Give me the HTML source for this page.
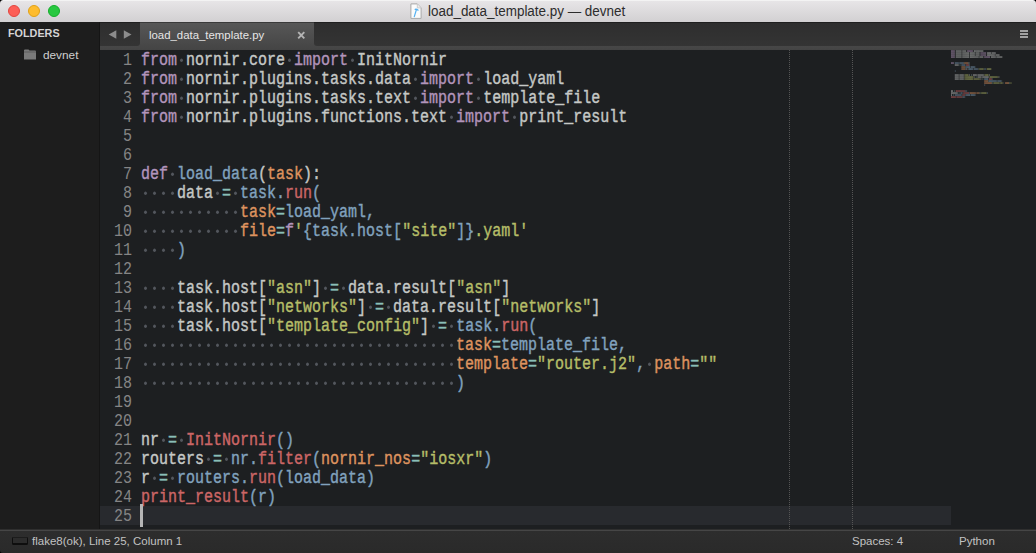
<!DOCTYPE html>
<html><head><meta charset="utf-8"><style>
html,body{margin:0;padding:0;}
body{width:1036px;height:553px;overflow:hidden;background:#000;position:relative;font-family:"Liberation Sans",sans-serif;}
#win{position:absolute;left:0;top:0;width:1036px;height:553px;border-radius:3.5px;overflow:hidden;background:#1d1f21;}
#title{position:absolute;left:0;top:0;width:1036px;height:22px;background:linear-gradient(#f3f3f3 0 1px,#e7e5e7 1px,#d2d0d2 22px);}
.tl{position:absolute;top:5px;width:12px;height:12px;border-radius:50%;box-sizing:border-box;}
#ttext{position:absolute;left:428px;top:3.5px;font-size:13.45px;color:#2c2c2c;white-space:nowrap;line-height:16px;transform-origin:0 12.66px;transform:scaleY(1.1);}
#ficon{position:absolute;left:410px;top:3px;width:13px;height:17px;}
#side{position:absolute;left:0;top:22px;width:99px;height:507px;background:#1d1d1d;border-right:1px solid #151515;}
#folders{position:absolute;left:8px;top:27px;font-size:10.8px;font-weight:bold;color:#d4d4d4;line-height:12px;letter-spacing:0px;}
#devnet{position:absolute;left:43px;top:48px;font-size:11.8px;color:#cfcfcf;line-height:14px;}
#tabbar{position:absolute;left:100px;top:22px;width:936px;height:28px;background:linear-gradient(#3a3a3a 0 1px,#575757 1px,#444444 28px);}
#wellL{position:absolute;left:100px;top:22px;width:40px;height:23.5px;background:linear-gradient(#1f1f1f 0 1px,#2e2e2e 1px,#343434);border-bottom-right-radius:3px;}
#wellR{position:absolute;left:314px;top:22px;width:722px;height:23.5px;background:linear-gradient(#1f1f1f 0 1px,#2e2e2e 1px,#343434);border-bottom-left-radius:3px;}
#tabtext{position:absolute;left:149px;top:28px;font-size:11.4px;color:#e6e6e6;line-height:14px;white-space:nowrap;}
#editor{position:absolute;left:100px;top:50px;width:936px;height:479px;background:#1d1f21;}
.curline{position:absolute;left:100px;top:506px;width:851px;height:19px;background:#282a2e;}
.ln{-webkit-text-stroke:0.35px currentColor;position:absolute;left:141px;height:19px;transform-origin:0 13.5px;transform:translateY(2.4px) scaleY(1.17);line-height:19px;font-family:"Liberation Mono",monospace;font-size:15px;white-space:pre;color:#c5c8c6;}
.gn{position:absolute;left:100px;width:32px;transform-origin:0 13.5px;transform:translateY(2.4px) scaleY(1.17);text-align:right;height:19px;line-height:19px;font-family:"Liberation Mono",monospace;font-size:15px;color:#858585;}
.p{color:#b294bb}.f{color:#c5c8c6}.b{color:#81a2be}.r{color:#cc6666}.o{color:#de935f}.g{color:#b5bd68}.a{color:#8abeb7}
#cursor{position:absolute;left:140px;top:504px;width:3px;height:23px;background:#b5b5b5;}
.ruler{position:absolute;top:50px;width:1px;height:479px;background:repeating-linear-gradient(#555 0 1px,transparent 1px 2px);}
#status{position:absolute;left:0;top:529px;width:1036px;height:24px;background:linear-gradient(#2f2f2f 0 1px,#464646 1px 2px,#2d2d2d 2px,#2a2a2a);}
.st{position:absolute;top:4.8px;font-size:11.5px;color:#c2c2c2;line-height:14px;white-space:nowrap;}
svg{position:absolute;left:0;top:0;}

</style></head><body>
<div id="win">
<div id="title">
  <div class="tl" style="left:8px;background:#fd5f57;border:1px solid #e2463f;"></div>
  <div class="tl" style="left:28px;background:#febc2e;border:1px solid #e1a116;"></div>
  <div class="tl" style="left:48px;background:#28c840;border:1px solid #14ae2a;"></div>
  <svg id="ficon" width="13" height="17" style="left:410px;top:3px"><path d="M0.9 0.9 H7.3 L11.1 4.9 V15.4 H0.9 Z" fill="#fbfbfb" stroke="#a9a9a9" stroke-width="1"/><path d="M7.3 1 V4.9 H11" fill="#ececec" stroke="#c4c4c4" stroke-width="0.8"/><path d="M4.3 13.6 L6.4 6.6 M5.2 6.3 Q6.8 6.0 8.1 7.2" fill="none" stroke="#55b2f2" stroke-width="1.25" stroke-linecap="round"/></svg>
  <div id="ttext">load_data_template.py — devnet</div>
</div>
<div id="side"></div>
<div id="folders">FOLDERS</div>
<svg width="14" height="12" style="left:24px;top:49px"><path d="M0 1.5 Q0 0.5 1 0.5 H4.5 L5.5 1.5 H11 Q12 1.5 12 2.5 V10.5 H0 Z" fill="#7a7a7a"/><rect x="0" y="2.5" width="12" height="1" fill="#5c5c5c"/></svg>
<div id="devnet">devnet</div>
<div id="tabbar"></div>
<div id="wellL"></div>
<div id="wellR"></div>
<div id="tabtext">load_data_template.py</div>
<svg width="10" height="10" style="left:297px;top:31px"><path d="M1.2 1.2 L7.3 7.3 M7.3 1.2 L1.2 7.3" stroke="#b4b4b4" stroke-width="1.9"/></svg>
<svg width="40" height="24" style="left:100px;top:22px"><path d="M8.7 12.5 L16.3 8.3 V16.7 Z" fill="#8c8c8c"/><path d="M31.5 12.5 L23.8 8.3 V16.7 Z" fill="#8c8c8c"/></svg>
<svg width="12" height="12" style="left:1019px;top:29px"><rect x="1" y="1" width="8" height="2" fill="#a2a2a2"/><rect x="1" y="4" width="8" height="2" fill="#a2a2a2"/><rect x="1" y="7" width="8" height="2" fill="#a2a2a2"/></svg>
<div id="editor"></div>
<div class="curline"></div>
<div class="ruler" style="left:789px"></div>
<div class="ruler" style="left:852px"></div>
<svg width="1036" height="553" style="fill:#53575d"><ellipse cx="181.5" cy="60.2" rx="1.45" ry="1.8"/><ellipse cx="289.5" cy="60.2" rx="1.45" ry="1.8"/><ellipse cx="352.5" cy="60.2" rx="1.45" ry="1.8"/><ellipse cx="181.5" cy="79.2" rx="1.45" ry="1.8"/><ellipse cx="415.5" cy="79.2" rx="1.45" ry="1.8"/><ellipse cx="478.5" cy="79.2" rx="1.45" ry="1.8"/><ellipse cx="181.5" cy="98.2" rx="1.45" ry="1.8"/><ellipse cx="415.5" cy="98.2" rx="1.45" ry="1.8"/><ellipse cx="478.5" cy="98.2" rx="1.45" ry="1.8"/><ellipse cx="181.5" cy="117.2" rx="1.45" ry="1.8"/><ellipse cx="451.5" cy="117.2" rx="1.45" ry="1.8"/><ellipse cx="514.5" cy="117.2" rx="1.45" ry="1.8"/><ellipse cx="172.5" cy="174.2" rx="1.45" ry="1.8"/><ellipse cx="145.5" cy="193.2" rx="1.45" ry="1.8"/><ellipse cx="154.5" cy="193.2" rx="1.45" ry="1.8"/><ellipse cx="163.5" cy="193.2" rx="1.45" ry="1.8"/><ellipse cx="172.5" cy="193.2" rx="1.45" ry="1.8"/><ellipse cx="217.5" cy="193.2" rx="1.45" ry="1.8"/><ellipse cx="235.5" cy="193.2" rx="1.45" ry="1.8"/><ellipse cx="145.5" cy="212.2" rx="1.45" ry="1.8"/><ellipse cx="154.5" cy="212.2" rx="1.45" ry="1.8"/><ellipse cx="163.5" cy="212.2" rx="1.45" ry="1.8"/><ellipse cx="172.5" cy="212.2" rx="1.45" ry="1.8"/><ellipse cx="181.5" cy="212.2" rx="1.45" ry="1.8"/><ellipse cx="190.5" cy="212.2" rx="1.45" ry="1.8"/><ellipse cx="199.5" cy="212.2" rx="1.45" ry="1.8"/><ellipse cx="208.5" cy="212.2" rx="1.45" ry="1.8"/><ellipse cx="217.5" cy="212.2" rx="1.45" ry="1.8"/><ellipse cx="226.5" cy="212.2" rx="1.45" ry="1.8"/><ellipse cx="235.5" cy="212.2" rx="1.45" ry="1.8"/><ellipse cx="145.5" cy="231.2" rx="1.45" ry="1.8"/><ellipse cx="154.5" cy="231.2" rx="1.45" ry="1.8"/><ellipse cx="163.5" cy="231.2" rx="1.45" ry="1.8"/><ellipse cx="172.5" cy="231.2" rx="1.45" ry="1.8"/><ellipse cx="181.5" cy="231.2" rx="1.45" ry="1.8"/><ellipse cx="190.5" cy="231.2" rx="1.45" ry="1.8"/><ellipse cx="199.5" cy="231.2" rx="1.45" ry="1.8"/><ellipse cx="208.5" cy="231.2" rx="1.45" ry="1.8"/><ellipse cx="217.5" cy="231.2" rx="1.45" ry="1.8"/><ellipse cx="226.5" cy="231.2" rx="1.45" ry="1.8"/><ellipse cx="235.5" cy="231.2" rx="1.45" ry="1.8"/><ellipse cx="145.5" cy="250.2" rx="1.45" ry="1.8"/><ellipse cx="154.5" cy="250.2" rx="1.45" ry="1.8"/><ellipse cx="163.5" cy="250.2" rx="1.45" ry="1.8"/><ellipse cx="172.5" cy="250.2" rx="1.45" ry="1.8"/><ellipse cx="145.5" cy="288.2" rx="1.45" ry="1.8"/><ellipse cx="154.5" cy="288.2" rx="1.45" ry="1.8"/><ellipse cx="163.5" cy="288.2" rx="1.45" ry="1.8"/><ellipse cx="172.5" cy="288.2" rx="1.45" ry="1.8"/><ellipse cx="325.5" cy="288.2" rx="1.45" ry="1.8"/><ellipse cx="343.5" cy="288.2" rx="1.45" ry="1.8"/><ellipse cx="145.5" cy="307.2" rx="1.45" ry="1.8"/><ellipse cx="154.5" cy="307.2" rx="1.45" ry="1.8"/><ellipse cx="163.5" cy="307.2" rx="1.45" ry="1.8"/><ellipse cx="172.5" cy="307.2" rx="1.45" ry="1.8"/><ellipse cx="370.5" cy="307.2" rx="1.45" ry="1.8"/><ellipse cx="388.5" cy="307.2" rx="1.45" ry="1.8"/><ellipse cx="145.5" cy="326.2" rx="1.45" ry="1.8"/><ellipse cx="154.5" cy="326.2" rx="1.45" ry="1.8"/><ellipse cx="163.5" cy="326.2" rx="1.45" ry="1.8"/><ellipse cx="172.5" cy="326.2" rx="1.45" ry="1.8"/><ellipse cx="433.5" cy="326.2" rx="1.45" ry="1.8"/><ellipse cx="451.5" cy="326.2" rx="1.45" ry="1.8"/><ellipse cx="145.5" cy="345.2" rx="1.45" ry="1.8"/><ellipse cx="154.5" cy="345.2" rx="1.45" ry="1.8"/><ellipse cx="163.5" cy="345.2" rx="1.45" ry="1.8"/><ellipse cx="172.5" cy="345.2" rx="1.45" ry="1.8"/><ellipse cx="181.5" cy="345.2" rx="1.45" ry="1.8"/><ellipse cx="190.5" cy="345.2" rx="1.45" ry="1.8"/><ellipse cx="199.5" cy="345.2" rx="1.45" ry="1.8"/><ellipse cx="208.5" cy="345.2" rx="1.45" ry="1.8"/><ellipse cx="217.5" cy="345.2" rx="1.45" ry="1.8"/><ellipse cx="226.5" cy="345.2" rx="1.45" ry="1.8"/><ellipse cx="235.5" cy="345.2" rx="1.45" ry="1.8"/><ellipse cx="244.5" cy="345.2" rx="1.45" ry="1.8"/><ellipse cx="253.5" cy="345.2" rx="1.45" ry="1.8"/><ellipse cx="262.5" cy="345.2" rx="1.45" ry="1.8"/><ellipse cx="271.5" cy="345.2" rx="1.45" ry="1.8"/><ellipse cx="280.5" cy="345.2" rx="1.45" ry="1.8"/><ellipse cx="289.5" cy="345.2" rx="1.45" ry="1.8"/><ellipse cx="298.5" cy="345.2" rx="1.45" ry="1.8"/><ellipse cx="307.5" cy="345.2" rx="1.45" ry="1.8"/><ellipse cx="316.5" cy="345.2" rx="1.45" ry="1.8"/><ellipse cx="325.5" cy="345.2" rx="1.45" ry="1.8"/><ellipse cx="334.5" cy="345.2" rx="1.45" ry="1.8"/><ellipse cx="343.5" cy="345.2" rx="1.45" ry="1.8"/><ellipse cx="352.5" cy="345.2" rx="1.45" ry="1.8"/><ellipse cx="361.5" cy="345.2" rx="1.45" ry="1.8"/><ellipse cx="370.5" cy="345.2" rx="1.45" ry="1.8"/><ellipse cx="379.5" cy="345.2" rx="1.45" ry="1.8"/><ellipse cx="388.5" cy="345.2" rx="1.45" ry="1.8"/><ellipse cx="397.5" cy="345.2" rx="1.45" ry="1.8"/><ellipse cx="406.5" cy="345.2" rx="1.45" ry="1.8"/><ellipse cx="415.5" cy="345.2" rx="1.45" ry="1.8"/><ellipse cx="424.5" cy="345.2" rx="1.45" ry="1.8"/><ellipse cx="433.5" cy="345.2" rx="1.45" ry="1.8"/><ellipse cx="442.5" cy="345.2" rx="1.45" ry="1.8"/><ellipse cx="451.5" cy="345.2" rx="1.45" ry="1.8"/><ellipse cx="145.5" cy="364.2" rx="1.45" ry="1.8"/><ellipse cx="154.5" cy="364.2" rx="1.45" ry="1.8"/><ellipse cx="163.5" cy="364.2" rx="1.45" ry="1.8"/><ellipse cx="172.5" cy="364.2" rx="1.45" ry="1.8"/><ellipse cx="181.5" cy="364.2" rx="1.45" ry="1.8"/><ellipse cx="190.5" cy="364.2" rx="1.45" ry="1.8"/><ellipse cx="199.5" cy="364.2" rx="1.45" ry="1.8"/><ellipse cx="208.5" cy="364.2" rx="1.45" ry="1.8"/><ellipse cx="217.5" cy="364.2" rx="1.45" ry="1.8"/><ellipse cx="226.5" cy="364.2" rx="1.45" ry="1.8"/><ellipse cx="235.5" cy="364.2" rx="1.45" ry="1.8"/><ellipse cx="244.5" cy="364.2" rx="1.45" ry="1.8"/><ellipse cx="253.5" cy="364.2" rx="1.45" ry="1.8"/><ellipse cx="262.5" cy="364.2" rx="1.45" ry="1.8"/><ellipse cx="271.5" cy="364.2" rx="1.45" ry="1.8"/><ellipse cx="280.5" cy="364.2" rx="1.45" ry="1.8"/><ellipse cx="289.5" cy="364.2" rx="1.45" ry="1.8"/><ellipse cx="298.5" cy="364.2" rx="1.45" ry="1.8"/><ellipse cx="307.5" cy="364.2" rx="1.45" ry="1.8"/><ellipse cx="316.5" cy="364.2" rx="1.45" ry="1.8"/><ellipse cx="325.5" cy="364.2" rx="1.45" ry="1.8"/><ellipse cx="334.5" cy="364.2" rx="1.45" ry="1.8"/><ellipse cx="343.5" cy="364.2" rx="1.45" ry="1.8"/><ellipse cx="352.5" cy="364.2" rx="1.45" ry="1.8"/><ellipse cx="361.5" cy="364.2" rx="1.45" ry="1.8"/><ellipse cx="370.5" cy="364.2" rx="1.45" ry="1.8"/><ellipse cx="379.5" cy="364.2" rx="1.45" ry="1.8"/><ellipse cx="388.5" cy="364.2" rx="1.45" ry="1.8"/><ellipse cx="397.5" cy="364.2" rx="1.45" ry="1.8"/><ellipse cx="406.5" cy="364.2" rx="1.45" ry="1.8"/><ellipse cx="415.5" cy="364.2" rx="1.45" ry="1.8"/><ellipse cx="424.5" cy="364.2" rx="1.45" ry="1.8"/><ellipse cx="433.5" cy="364.2" rx="1.45" ry="1.8"/><ellipse cx="442.5" cy="364.2" rx="1.45" ry="1.8"/><ellipse cx="451.5" cy="364.2" rx="1.45" ry="1.8"/><ellipse cx="649.5" cy="364.2" rx="1.45" ry="1.8"/><ellipse cx="145.5" cy="383.2" rx="1.45" ry="1.8"/><ellipse cx="154.5" cy="383.2" rx="1.45" ry="1.8"/><ellipse cx="163.5" cy="383.2" rx="1.45" ry="1.8"/><ellipse cx="172.5" cy="383.2" rx="1.45" ry="1.8"/><ellipse cx="181.5" cy="383.2" rx="1.45" ry="1.8"/><ellipse cx="190.5" cy="383.2" rx="1.45" ry="1.8"/><ellipse cx="199.5" cy="383.2" rx="1.45" ry="1.8"/><ellipse cx="208.5" cy="383.2" rx="1.45" ry="1.8"/><ellipse cx="217.5" cy="383.2" rx="1.45" ry="1.8"/><ellipse cx="226.5" cy="383.2" rx="1.45" ry="1.8"/><ellipse cx="235.5" cy="383.2" rx="1.45" ry="1.8"/><ellipse cx="244.5" cy="383.2" rx="1.45" ry="1.8"/><ellipse cx="253.5" cy="383.2" rx="1.45" ry="1.8"/><ellipse cx="262.5" cy="383.2" rx="1.45" ry="1.8"/><ellipse cx="271.5" cy="383.2" rx="1.45" ry="1.8"/><ellipse cx="280.5" cy="383.2" rx="1.45" ry="1.8"/><ellipse cx="289.5" cy="383.2" rx="1.45" ry="1.8"/><ellipse cx="298.5" cy="383.2" rx="1.45" ry="1.8"/><ellipse cx="307.5" cy="383.2" rx="1.45" ry="1.8"/><ellipse cx="316.5" cy="383.2" rx="1.45" ry="1.8"/><ellipse cx="325.5" cy="383.2" rx="1.45" ry="1.8"/><ellipse cx="334.5" cy="383.2" rx="1.45" ry="1.8"/><ellipse cx="343.5" cy="383.2" rx="1.45" ry="1.8"/><ellipse cx="352.5" cy="383.2" rx="1.45" ry="1.8"/><ellipse cx="361.5" cy="383.2" rx="1.45" ry="1.8"/><ellipse cx="370.5" cy="383.2" rx="1.45" ry="1.8"/><ellipse cx="379.5" cy="383.2" rx="1.45" ry="1.8"/><ellipse cx="388.5" cy="383.2" rx="1.45" ry="1.8"/><ellipse cx="397.5" cy="383.2" rx="1.45" ry="1.8"/><ellipse cx="406.5" cy="383.2" rx="1.45" ry="1.8"/><ellipse cx="415.5" cy="383.2" rx="1.45" ry="1.8"/><ellipse cx="424.5" cy="383.2" rx="1.45" ry="1.8"/><ellipse cx="433.5" cy="383.2" rx="1.45" ry="1.8"/><ellipse cx="442.5" cy="383.2" rx="1.45" ry="1.8"/><ellipse cx="451.5" cy="383.2" rx="1.45" ry="1.8"/><ellipse cx="163.5" cy="440.2" rx="1.45" ry="1.8"/><ellipse cx="181.5" cy="440.2" rx="1.45" ry="1.8"/><ellipse cx="208.5" cy="459.2" rx="1.45" ry="1.8"/><ellipse cx="226.5" cy="459.2" rx="1.45" ry="1.8"/><ellipse cx="154.5" cy="478.2" rx="1.45" ry="1.8"/><ellipse cx="172.5" cy="478.2" rx="1.45" ry="1.8"/></svg>
<div class="gn" style="top:50px">1</div>
<div class="gn" style="top:69px">2</div>
<div class="gn" style="top:88px">3</div>
<div class="gn" style="top:107px">4</div>
<div class="gn" style="top:126px">5</div>
<div class="gn" style="top:145px">6</div>
<div class="gn" style="top:164px">7</div>
<div class="gn" style="top:183px">8</div>
<div class="gn" style="top:202px">9</div>
<div class="gn" style="top:221px">10</div>
<div class="gn" style="top:240px">11</div>
<div class="gn" style="top:259px">12</div>
<div class="gn" style="top:278px">13</div>
<div class="gn" style="top:297px">14</div>
<div class="gn" style="top:316px">15</div>
<div class="gn" style="top:335px">16</div>
<div class="gn" style="top:354px">17</div>
<div class="gn" style="top:373px">18</div>
<div class="gn" style="top:392px">19</div>
<div class="gn" style="top:411px">20</div>
<div class="gn" style="top:430px">21</div>
<div class="gn" style="top:449px">22</div>
<div class="gn" style="top:468px">23</div>
<div class="gn" style="top:487px">24</div>
<div class="gn" style="top:506px">25</div>
<div class="ln" style="top:50px"><span class="p">from</span> <span class="f">nornir.core</span> <span class="p">import</span> <span class="f">InitNornir</span></div>
<div class="ln" style="top:69px"><span class="p">from</span> <span class="f">nornir.plugins.tasks.data</span> <span class="p">import</span> <span class="f">load_yaml</span></div>
<div class="ln" style="top:88px"><span class="p">from</span> <span class="f">nornir.plugins.tasks.text</span> <span class="p">import</span> <span class="f">template_file</span></div>
<div class="ln" style="top:107px"><span class="p">from</span> <span class="f">nornir.plugins.functions.text</span> <span class="p">import</span> <span class="f">print_result</span></div>
<div class="ln" style="top:126px"></div>
<div class="ln" style="top:145px"></div>
<div class="ln" style="top:164px"><span class="p">def</span> <span class="b">load_data</span><span class="f">(</span><span class="o">task</span><span class="f">):</span></div>
<div class="ln" style="top:183px">    <span class="f">data</span> <span class="a">=</span> <span class="b">task.</span><span class="r">run</span><span class="b">(</span></div>
<div class="ln" style="top:202px">           <span class="o">task</span><span class="a">=</span><span class="b">load_yaml,</span></div>
<div class="ln" style="top:221px">           <span class="o">file</span><span class="a">=</span><span class="p">f</span><span class="g">&#x27;</span><span class="b">{task.host[</span><span class="g">&quot;site&quot;</span><span class="b">]}</span><span class="g">.yaml&#x27;</span></div>
<div class="ln" style="top:240px">    <span class="b">)</span></div>
<div class="ln" style="top:259px"></div>
<div class="ln" style="top:278px">    <span class="f">task.host[</span><span class="g">&quot;asn&quot;</span><span class="f">]</span> <span class="a">=</span> <span class="f">data.result[</span><span class="g">&quot;asn&quot;</span><span class="f">]</span></div>
<div class="ln" style="top:297px">    <span class="f">task.host[</span><span class="g">&quot;networks&quot;</span><span class="f">]</span> <span class="a">=</span> <span class="f">data.result[</span><span class="g">&quot;networks&quot;</span><span class="f">]</span></div>
<div class="ln" style="top:316px">    <span class="f">task.host[</span><span class="g">&quot;template_config&quot;</span><span class="f">]</span> <span class="a">=</span> <span class="b">task.</span><span class="r">run</span><span class="b">(</span></div>
<div class="ln" style="top:335px">                                   <span class="o">task</span><span class="a">=</span><span class="b">template_file,</span></div>
<div class="ln" style="top:354px">                                   <span class="o">template</span><span class="a">=</span><span class="g">&quot;router.j2&quot;</span><span class="b">,</span> <span class="o">path</span><span class="a">=</span><span class="g">&quot;&quot;</span></div>
<div class="ln" style="top:373px">                                   <span class="b">)</span></div>
<div class="ln" style="top:392px"></div>
<div class="ln" style="top:411px"></div>
<div class="ln" style="top:430px"><span class="f">nr</span> <span class="a">=</span> <span class="r">InitNornir</span><span class="b">()</span></div>
<div class="ln" style="top:449px"><span class="f">routers</span> <span class="a">=</span> <span class="b">nr.</span><span class="r">filter</span><span class="b">(</span><span class="o">nornir_nos</span><span class="a">=</span><span class="g">&quot;iosxr&quot;</span><span class="b">)</span></div>
<div class="ln" style="top:468px"><span class="f">r</span> <span class="a">=</span> <span class="b">routers.</span><span class="r">run</span><span class="b">(load_data)</span></div>
<div class="ln" style="top:487px"><span class="r">print_result</span><span class="b">(r)</span></div>
<div class="ln" style="top:506px"></div>
<div id="cursor"></div>
<svg width="1036" height="553" style="opacity:0.62"><rect x="951.00" y="50.20" width="0.95" height="1.7" fill="#b294bb" fill-opacity="0.85"/><rect x="951.95" y="50.20" width="0.95" height="1.7" fill="#b294bb" fill-opacity="0.85"/><rect x="952.90" y="50.20" width="0.95" height="1.7" fill="#b294bb" fill-opacity="0.85"/><rect x="953.85" y="50.20" width="0.95" height="1.7" fill="#b294bb" fill-opacity="0.85"/><rect x="955.75" y="50.20" width="0.95" height="1.7" fill="#c5c8c6" fill-opacity="0.85"/><rect x="956.70" y="50.20" width="0.95" height="1.7" fill="#c5c8c6" fill-opacity="0.85"/><rect x="957.65" y="50.20" width="0.95" height="1.7" fill="#c5c8c6" fill-opacity="0.85"/><rect x="958.60" y="50.20" width="0.95" height="1.7" fill="#c5c8c6" fill-opacity="0.85"/><rect x="959.55" y="50.20" width="0.95" height="1.7" fill="#c5c8c6" fill-opacity="0.85"/><rect x="960.50" y="50.20" width="0.95" height="1.7" fill="#c5c8c6" fill-opacity="0.85"/><rect x="961.45" y="50.20" width="0.95" height="1.7" fill="#c5c8c6" fill-opacity="0.25"/><rect x="962.40" y="50.20" width="0.95" height="1.7" fill="#c5c8c6" fill-opacity="0.85"/><rect x="963.35" y="50.20" width="0.95" height="1.7" fill="#c5c8c6" fill-opacity="0.85"/><rect x="964.30" y="50.20" width="0.95" height="1.7" fill="#c5c8c6" fill-opacity="0.85"/><rect x="965.25" y="50.20" width="0.95" height="1.7" fill="#c5c8c6" fill-opacity="0.85"/><rect x="967.15" y="50.20" width="0.95" height="1.7" fill="#b294bb" fill-opacity="0.85"/><rect x="968.10" y="50.20" width="0.95" height="1.7" fill="#b294bb" fill-opacity="0.85"/><rect x="969.05" y="50.20" width="0.95" height="1.7" fill="#b294bb" fill-opacity="0.85"/><rect x="970.00" y="50.20" width="0.95" height="1.7" fill="#b294bb" fill-opacity="0.85"/><rect x="970.95" y="50.20" width="0.95" height="1.7" fill="#b294bb" fill-opacity="0.85"/><rect x="971.90" y="50.20" width="0.95" height="1.7" fill="#b294bb" fill-opacity="0.85"/><rect x="973.80" y="50.20" width="0.95" height="1.7" fill="#c5c8c6" fill-opacity="1.00"/><rect x="974.75" y="50.20" width="0.95" height="1.7" fill="#c5c8c6" fill-opacity="0.85"/><rect x="975.70" y="50.20" width="0.95" height="1.7" fill="#c5c8c6" fill-opacity="0.85"/><rect x="976.65" y="50.20" width="0.95" height="1.7" fill="#c5c8c6" fill-opacity="0.85"/><rect x="977.60" y="50.20" width="0.95" height="1.7" fill="#c5c8c6" fill-opacity="1.00"/><rect x="978.55" y="50.20" width="0.95" height="1.7" fill="#c5c8c6" fill-opacity="0.85"/><rect x="979.50" y="50.20" width="0.95" height="1.7" fill="#c5c8c6" fill-opacity="0.85"/><rect x="980.45" y="50.20" width="0.95" height="1.7" fill="#c5c8c6" fill-opacity="0.85"/><rect x="981.40" y="50.20" width="0.95" height="1.7" fill="#c5c8c6" fill-opacity="0.85"/><rect x="982.35" y="50.20" width="0.95" height="1.7" fill="#c5c8c6" fill-opacity="0.85"/><rect x="951.00" y="52.20" width="0.95" height="1.7" fill="#b294bb" fill-opacity="0.85"/><rect x="951.95" y="52.20" width="0.95" height="1.7" fill="#b294bb" fill-opacity="0.85"/><rect x="952.90" y="52.20" width="0.95" height="1.7" fill="#b294bb" fill-opacity="0.85"/><rect x="953.85" y="52.20" width="0.95" height="1.7" fill="#b294bb" fill-opacity="0.85"/><rect x="955.75" y="52.20" width="0.95" height="1.7" fill="#c5c8c6" fill-opacity="0.85"/><rect x="956.70" y="52.20" width="0.95" height="1.7" fill="#c5c8c6" fill-opacity="0.85"/><rect x="957.65" y="52.20" width="0.95" height="1.7" fill="#c5c8c6" fill-opacity="0.85"/><rect x="958.60" y="52.20" width="0.95" height="1.7" fill="#c5c8c6" fill-opacity="0.85"/><rect x="959.55" y="52.20" width="0.95" height="1.7" fill="#c5c8c6" fill-opacity="0.85"/><rect x="960.50" y="52.20" width="0.95" height="1.7" fill="#c5c8c6" fill-opacity="0.85"/><rect x="961.45" y="52.20" width="0.95" height="1.7" fill="#c5c8c6" fill-opacity="0.25"/><rect x="962.40" y="52.20" width="0.95" height="1.7" fill="#c5c8c6" fill-opacity="0.85"/><rect x="963.35" y="52.20" width="0.95" height="1.7" fill="#c5c8c6" fill-opacity="0.85"/><rect x="964.30" y="52.20" width="0.95" height="1.7" fill="#c5c8c6" fill-opacity="0.85"/><rect x="965.25" y="52.20" width="0.95" height="1.7" fill="#c5c8c6" fill-opacity="0.85"/><rect x="966.20" y="52.20" width="0.95" height="1.7" fill="#c5c8c6" fill-opacity="0.85"/><rect x="967.15" y="52.20" width="0.95" height="1.7" fill="#c5c8c6" fill-opacity="0.85"/><rect x="968.10" y="52.20" width="0.95" height="1.7" fill="#c5c8c6" fill-opacity="0.85"/><rect x="969.05" y="52.20" width="0.95" height="1.7" fill="#c5c8c6" fill-opacity="0.25"/><rect x="970.00" y="52.20" width="0.95" height="1.7" fill="#c5c8c6" fill-opacity="0.85"/><rect x="970.95" y="52.20" width="0.95" height="1.7" fill="#c5c8c6" fill-opacity="0.85"/><rect x="971.90" y="52.20" width="0.95" height="1.7" fill="#c5c8c6" fill-opacity="0.85"/><rect x="972.85" y="52.20" width="0.95" height="1.7" fill="#c5c8c6" fill-opacity="0.85"/><rect x="973.80" y="52.20" width="0.95" height="1.7" fill="#c5c8c6" fill-opacity="0.85"/><rect x="974.75" y="52.20" width="0.95" height="1.7" fill="#c5c8c6" fill-opacity="0.25"/><rect x="975.70" y="52.20" width="0.95" height="1.7" fill="#c5c8c6" fill-opacity="0.85"/><rect x="976.65" y="52.20" width="0.95" height="1.7" fill="#c5c8c6" fill-opacity="0.85"/><rect x="977.60" y="52.20" width="0.95" height="1.7" fill="#c5c8c6" fill-opacity="0.85"/><rect x="978.55" y="52.20" width="0.95" height="1.7" fill="#c5c8c6" fill-opacity="0.85"/><rect x="980.45" y="52.20" width="0.95" height="1.7" fill="#b294bb" fill-opacity="0.85"/><rect x="981.40" y="52.20" width="0.95" height="1.7" fill="#b294bb" fill-opacity="0.85"/><rect x="982.35" y="52.20" width="0.95" height="1.7" fill="#b294bb" fill-opacity="0.85"/><rect x="983.30" y="52.20" width="0.95" height="1.7" fill="#b294bb" fill-opacity="0.85"/><rect x="984.25" y="52.20" width="0.95" height="1.7" fill="#b294bb" fill-opacity="0.85"/><rect x="985.20" y="52.20" width="0.95" height="1.7" fill="#b294bb" fill-opacity="0.85"/><rect x="987.10" y="52.20" width="0.95" height="1.7" fill="#c5c8c6" fill-opacity="0.85"/><rect x="988.05" y="52.20" width="0.95" height="1.7" fill="#c5c8c6" fill-opacity="0.85"/><rect x="989.00" y="52.20" width="0.95" height="1.7" fill="#c5c8c6" fill-opacity="0.85"/><rect x="989.95" y="52.20" width="0.95" height="1.7" fill="#c5c8c6" fill-opacity="0.85"/><rect x="990.90" y="52.20" width="0.95" height="1.7" fill="#c5c8c6" fill-opacity="0.35"/><rect x="991.85" y="52.20" width="0.95" height="1.7" fill="#c5c8c6" fill-opacity="0.85"/><rect x="992.80" y="52.20" width="0.95" height="1.7" fill="#c5c8c6" fill-opacity="0.85"/><rect x="993.75" y="52.20" width="0.95" height="1.7" fill="#c5c8c6" fill-opacity="0.85"/><rect x="994.70" y="52.20" width="0.95" height="1.7" fill="#c5c8c6" fill-opacity="0.85"/><rect x="951.00" y="54.20" width="0.95" height="1.7" fill="#b294bb" fill-opacity="0.85"/><rect x="951.95" y="54.20" width="0.95" height="1.7" fill="#b294bb" fill-opacity="0.85"/><rect x="952.90" y="54.20" width="0.95" height="1.7" fill="#b294bb" fill-opacity="0.85"/><rect x="953.85" y="54.20" width="0.95" height="1.7" fill="#b294bb" fill-opacity="0.85"/><rect x="955.75" y="54.20" width="0.95" height="1.7" fill="#c5c8c6" fill-opacity="0.85"/><rect x="956.70" y="54.20" width="0.95" height="1.7" fill="#c5c8c6" fill-opacity="0.85"/><rect x="957.65" y="54.20" width="0.95" height="1.7" fill="#c5c8c6" fill-opacity="0.85"/><rect x="958.60" y="54.20" width="0.95" height="1.7" fill="#c5c8c6" fill-opacity="0.85"/><rect x="959.55" y="54.20" width="0.95" height="1.7" fill="#c5c8c6" fill-opacity="0.85"/><rect x="960.50" y="54.20" width="0.95" height="1.7" fill="#c5c8c6" fill-opacity="0.85"/><rect x="961.45" y="54.20" width="0.95" height="1.7" fill="#c5c8c6" fill-opacity="0.25"/><rect x="962.40" y="54.20" width="0.95" height="1.7" fill="#c5c8c6" fill-opacity="0.85"/><rect x="963.35" y="54.20" width="0.95" height="1.7" fill="#c5c8c6" fill-opacity="0.85"/><rect x="964.30" y="54.20" width="0.95" height="1.7" fill="#c5c8c6" fill-opacity="0.85"/><rect x="965.25" y="54.20" width="0.95" height="1.7" fill="#c5c8c6" fill-opacity="0.85"/><rect x="966.20" y="54.20" width="0.95" height="1.7" fill="#c5c8c6" fill-opacity="0.85"/><rect x="967.15" y="54.20" width="0.95" height="1.7" fill="#c5c8c6" fill-opacity="0.85"/><rect x="968.10" y="54.20" width="0.95" height="1.7" fill="#c5c8c6" fill-opacity="0.85"/><rect x="969.05" y="54.20" width="0.95" height="1.7" fill="#c5c8c6" fill-opacity="0.25"/><rect x="970.00" y="54.20" width="0.95" height="1.7" fill="#c5c8c6" fill-opacity="0.85"/><rect x="970.95" y="54.20" width="0.95" height="1.7" fill="#c5c8c6" fill-opacity="0.85"/><rect x="971.90" y="54.20" width="0.95" height="1.7" fill="#c5c8c6" fill-opacity="0.85"/><rect x="972.85" y="54.20" width="0.95" height="1.7" fill="#c5c8c6" fill-opacity="0.85"/><rect x="973.80" y="54.20" width="0.95" height="1.7" fill="#c5c8c6" fill-opacity="0.85"/><rect x="974.75" y="54.20" width="0.95" height="1.7" fill="#c5c8c6" fill-opacity="0.25"/><rect x="975.70" y="54.20" width="0.95" height="1.7" fill="#c5c8c6" fill-opacity="0.85"/><rect x="976.65" y="54.20" width="0.95" height="1.7" fill="#c5c8c6" fill-opacity="0.85"/><rect x="977.60" y="54.20" width="0.95" height="1.7" fill="#c5c8c6" fill-opacity="0.85"/><rect x="978.55" y="54.20" width="0.95" height="1.7" fill="#c5c8c6" fill-opacity="0.85"/><rect x="980.45" y="54.20" width="0.95" height="1.7" fill="#b294bb" fill-opacity="0.85"/><rect x="981.40" y="54.20" width="0.95" height="1.7" fill="#b294bb" fill-opacity="0.85"/><rect x="982.35" y="54.20" width="0.95" height="1.7" fill="#b294bb" fill-opacity="0.85"/><rect x="983.30" y="54.20" width="0.95" height="1.7" fill="#b294bb" fill-opacity="0.85"/><rect x="984.25" y="54.20" width="0.95" height="1.7" fill="#b294bb" fill-opacity="0.85"/><rect x="985.20" y="54.20" width="0.95" height="1.7" fill="#b294bb" fill-opacity="0.85"/><rect x="987.10" y="54.20" width="0.95" height="1.7" fill="#c5c8c6" fill-opacity="0.85"/><rect x="988.05" y="54.20" width="0.95" height="1.7" fill="#c5c8c6" fill-opacity="0.85"/><rect x="989.00" y="54.20" width="0.95" height="1.7" fill="#c5c8c6" fill-opacity="0.85"/><rect x="989.95" y="54.20" width="0.95" height="1.7" fill="#c5c8c6" fill-opacity="0.85"/><rect x="990.90" y="54.20" width="0.95" height="1.7" fill="#c5c8c6" fill-opacity="0.85"/><rect x="991.85" y="54.20" width="0.95" height="1.7" fill="#c5c8c6" fill-opacity="0.85"/><rect x="992.80" y="54.20" width="0.95" height="1.7" fill="#c5c8c6" fill-opacity="0.85"/><rect x="993.75" y="54.20" width="0.95" height="1.7" fill="#c5c8c6" fill-opacity="0.85"/><rect x="994.70" y="54.20" width="0.95" height="1.7" fill="#c5c8c6" fill-opacity="0.35"/><rect x="995.65" y="54.20" width="0.95" height="1.7" fill="#c5c8c6" fill-opacity="0.85"/><rect x="996.60" y="54.20" width="0.95" height="1.7" fill="#c5c8c6" fill-opacity="0.85"/><rect x="997.55" y="54.20" width="0.95" height="1.7" fill="#c5c8c6" fill-opacity="0.85"/><rect x="998.50" y="54.20" width="0.95" height="1.7" fill="#c5c8c6" fill-opacity="0.85"/><rect x="951.00" y="56.20" width="0.95" height="1.7" fill="#b294bb" fill-opacity="0.85"/><rect x="951.95" y="56.20" width="0.95" height="1.7" fill="#b294bb" fill-opacity="0.85"/><rect x="952.90" y="56.20" width="0.95" height="1.7" fill="#b294bb" fill-opacity="0.85"/><rect x="953.85" y="56.20" width="0.95" height="1.7" fill="#b294bb" fill-opacity="0.85"/><rect x="955.75" y="56.20" width="0.95" height="1.7" fill="#c5c8c6" fill-opacity="0.85"/><rect x="956.70" y="56.20" width="0.95" height="1.7" fill="#c5c8c6" fill-opacity="0.85"/><rect x="957.65" y="56.20" width="0.95" height="1.7" fill="#c5c8c6" fill-opacity="0.85"/><rect x="958.60" y="56.20" width="0.95" height="1.7" fill="#c5c8c6" fill-opacity="0.85"/><rect x="959.55" y="56.20" width="0.95" height="1.7" fill="#c5c8c6" fill-opacity="0.85"/><rect x="960.50" y="56.20" width="0.95" height="1.7" fill="#c5c8c6" fill-opacity="0.85"/><rect x="961.45" y="56.20" width="0.95" height="1.7" fill="#c5c8c6" fill-opacity="0.25"/><rect x="962.40" y="56.20" width="0.95" height="1.7" fill="#c5c8c6" fill-opacity="0.85"/><rect x="963.35" y="56.20" width="0.95" height="1.7" fill="#c5c8c6" fill-opacity="0.85"/><rect x="964.30" y="56.20" width="0.95" height="1.7" fill="#c5c8c6" fill-opacity="0.85"/><rect x="965.25" y="56.20" width="0.95" height="1.7" fill="#c5c8c6" fill-opacity="0.85"/><rect x="966.20" y="56.20" width="0.95" height="1.7" fill="#c5c8c6" fill-opacity="0.85"/><rect x="967.15" y="56.20" width="0.95" height="1.7" fill="#c5c8c6" fill-opacity="0.85"/><rect x="968.10" y="56.20" width="0.95" height="1.7" fill="#c5c8c6" fill-opacity="0.85"/><rect x="969.05" y="56.20" width="0.95" height="1.7" fill="#c5c8c6" fill-opacity="0.25"/><rect x="970.00" y="56.20" width="0.95" height="1.7" fill="#c5c8c6" fill-opacity="0.85"/><rect x="970.95" y="56.20" width="0.95" height="1.7" fill="#c5c8c6" fill-opacity="0.85"/><rect x="971.90" y="56.20" width="0.95" height="1.7" fill="#c5c8c6" fill-opacity="0.85"/><rect x="972.85" y="56.20" width="0.95" height="1.7" fill="#c5c8c6" fill-opacity="0.85"/><rect x="973.80" y="56.20" width="0.95" height="1.7" fill="#c5c8c6" fill-opacity="0.85"/><rect x="974.75" y="56.20" width="0.95" height="1.7" fill="#c5c8c6" fill-opacity="0.85"/><rect x="975.70" y="56.20" width="0.95" height="1.7" fill="#c5c8c6" fill-opacity="0.85"/><rect x="976.65" y="56.20" width="0.95" height="1.7" fill="#c5c8c6" fill-opacity="0.85"/><rect x="977.60" y="56.20" width="0.95" height="1.7" fill="#c5c8c6" fill-opacity="0.85"/><rect x="978.55" y="56.20" width="0.95" height="1.7" fill="#c5c8c6" fill-opacity="0.25"/><rect x="979.50" y="56.20" width="0.95" height="1.7" fill="#c5c8c6" fill-opacity="0.85"/><rect x="980.45" y="56.20" width="0.95" height="1.7" fill="#c5c8c6" fill-opacity="0.85"/><rect x="981.40" y="56.20" width="0.95" height="1.7" fill="#c5c8c6" fill-opacity="0.85"/><rect x="982.35" y="56.20" width="0.95" height="1.7" fill="#c5c8c6" fill-opacity="0.85"/><rect x="984.25" y="56.20" width="0.95" height="1.7" fill="#b294bb" fill-opacity="0.85"/><rect x="985.20" y="56.20" width="0.95" height="1.7" fill="#b294bb" fill-opacity="0.85"/><rect x="986.15" y="56.20" width="0.95" height="1.7" fill="#b294bb" fill-opacity="0.85"/><rect x="987.10" y="56.20" width="0.95" height="1.7" fill="#b294bb" fill-opacity="0.85"/><rect x="988.05" y="56.20" width="0.95" height="1.7" fill="#b294bb" fill-opacity="0.85"/><rect x="989.00" y="56.20" width="0.95" height="1.7" fill="#b294bb" fill-opacity="0.85"/><rect x="990.90" y="56.20" width="0.95" height="1.7" fill="#c5c8c6" fill-opacity="0.85"/><rect x="991.85" y="56.20" width="0.95" height="1.7" fill="#c5c8c6" fill-opacity="0.85"/><rect x="992.80" y="56.20" width="0.95" height="1.7" fill="#c5c8c6" fill-opacity="0.85"/><rect x="993.75" y="56.20" width="0.95" height="1.7" fill="#c5c8c6" fill-opacity="0.85"/><rect x="994.70" y="56.20" width="0.95" height="1.7" fill="#c5c8c6" fill-opacity="0.85"/><rect x="995.65" y="56.20" width="0.95" height="1.7" fill="#c5c8c6" fill-opacity="0.35"/><rect x="996.60" y="56.20" width="0.95" height="1.7" fill="#c5c8c6" fill-opacity="0.85"/><rect x="997.55" y="56.20" width="0.95" height="1.7" fill="#c5c8c6" fill-opacity="0.85"/><rect x="998.50" y="56.20" width="0.95" height="1.7" fill="#c5c8c6" fill-opacity="0.85"/><rect x="999.45" y="56.20" width="0.95" height="1.7" fill="#c5c8c6" fill-opacity="0.85"/><rect x="1000.40" y="56.20" width="0.95" height="1.7" fill="#c5c8c6" fill-opacity="0.85"/><rect x="1001.35" y="56.20" width="0.95" height="1.7" fill="#c5c8c6" fill-opacity="0.85"/><rect x="951.00" y="62.20" width="0.95" height="1.7" fill="#b294bb" fill-opacity="0.85"/><rect x="951.95" y="62.20" width="0.95" height="1.7" fill="#b294bb" fill-opacity="0.85"/><rect x="952.90" y="62.20" width="0.95" height="1.7" fill="#b294bb" fill-opacity="0.85"/><rect x="954.80" y="62.20" width="0.95" height="1.7" fill="#81a2be" fill-opacity="0.85"/><rect x="955.75" y="62.20" width="0.95" height="1.7" fill="#81a2be" fill-opacity="0.85"/><rect x="956.70" y="62.20" width="0.95" height="1.7" fill="#81a2be" fill-opacity="0.85"/><rect x="957.65" y="62.20" width="0.95" height="1.7" fill="#81a2be" fill-opacity="0.85"/><rect x="958.60" y="62.20" width="0.95" height="1.7" fill="#81a2be" fill-opacity="0.35"/><rect x="959.55" y="62.20" width="0.95" height="1.7" fill="#81a2be" fill-opacity="0.85"/><rect x="960.50" y="62.20" width="0.95" height="1.7" fill="#81a2be" fill-opacity="0.85"/><rect x="961.45" y="62.20" width="0.95" height="1.7" fill="#81a2be" fill-opacity="0.85"/><rect x="962.40" y="62.20" width="0.95" height="1.7" fill="#81a2be" fill-opacity="0.85"/><rect x="963.35" y="62.20" width="0.95" height="1.7" fill="#c5c8c6" fill-opacity="0.55"/><rect x="964.30" y="62.20" width="0.95" height="1.7" fill="#de935f" fill-opacity="0.85"/><rect x="965.25" y="62.20" width="0.95" height="1.7" fill="#de935f" fill-opacity="0.85"/><rect x="966.20" y="62.20" width="0.95" height="1.7" fill="#de935f" fill-opacity="0.85"/><rect x="967.15" y="62.20" width="0.95" height="1.7" fill="#de935f" fill-opacity="0.85"/><rect x="968.10" y="62.20" width="0.95" height="1.7" fill="#c5c8c6" fill-opacity="0.55"/><rect x="969.05" y="62.20" width="0.95" height="1.7" fill="#c5c8c6" fill-opacity="0.35"/><rect x="954.80" y="64.20" width="0.95" height="1.7" fill="#c5c8c6" fill-opacity="0.85"/><rect x="955.75" y="64.20" width="0.95" height="1.7" fill="#c5c8c6" fill-opacity="0.85"/><rect x="956.70" y="64.20" width="0.95" height="1.7" fill="#c5c8c6" fill-opacity="0.85"/><rect x="957.65" y="64.20" width="0.95" height="1.7" fill="#c5c8c6" fill-opacity="0.85"/><rect x="959.55" y="64.20" width="0.95" height="1.7" fill="#8abeb7" fill-opacity="0.55"/><rect x="961.45" y="64.20" width="0.95" height="1.7" fill="#81a2be" fill-opacity="0.85"/><rect x="962.40" y="64.20" width="0.95" height="1.7" fill="#81a2be" fill-opacity="0.85"/><rect x="963.35" y="64.20" width="0.95" height="1.7" fill="#81a2be" fill-opacity="0.85"/><rect x="964.30" y="64.20" width="0.95" height="1.7" fill="#81a2be" fill-opacity="0.85"/><rect x="965.25" y="64.20" width="0.95" height="1.7" fill="#81a2be" fill-opacity="0.25"/><rect x="966.20" y="64.20" width="0.95" height="1.7" fill="#cc6666" fill-opacity="0.85"/><rect x="967.15" y="64.20" width="0.95" height="1.7" fill="#cc6666" fill-opacity="0.85"/><rect x="968.10" y="64.20" width="0.95" height="1.7" fill="#cc6666" fill-opacity="0.85"/><rect x="969.05" y="64.20" width="0.95" height="1.7" fill="#81a2be" fill-opacity="0.55"/><rect x="961.45" y="66.20" width="0.95" height="1.7" fill="#de935f" fill-opacity="0.85"/><rect x="962.40" y="66.20" width="0.95" height="1.7" fill="#de935f" fill-opacity="0.85"/><rect x="963.35" y="66.20" width="0.95" height="1.7" fill="#de935f" fill-opacity="0.85"/><rect x="964.30" y="66.20" width="0.95" height="1.7" fill="#de935f" fill-opacity="0.85"/><rect x="965.25" y="66.20" width="0.95" height="1.7" fill="#8abeb7" fill-opacity="0.55"/><rect x="966.20" y="66.20" width="0.95" height="1.7" fill="#81a2be" fill-opacity="0.85"/><rect x="967.15" y="66.20" width="0.95" height="1.7" fill="#81a2be" fill-opacity="0.85"/><rect x="968.10" y="66.20" width="0.95" height="1.7" fill="#81a2be" fill-opacity="0.85"/><rect x="969.05" y="66.20" width="0.95" height="1.7" fill="#81a2be" fill-opacity="0.85"/><rect x="970.00" y="66.20" width="0.95" height="1.7" fill="#81a2be" fill-opacity="0.35"/><rect x="970.95" y="66.20" width="0.95" height="1.7" fill="#81a2be" fill-opacity="0.85"/><rect x="971.90" y="66.20" width="0.95" height="1.7" fill="#81a2be" fill-opacity="0.85"/><rect x="972.85" y="66.20" width="0.95" height="1.7" fill="#81a2be" fill-opacity="0.85"/><rect x="973.80" y="66.20" width="0.95" height="1.7" fill="#81a2be" fill-opacity="0.85"/><rect x="974.75" y="66.20" width="0.95" height="1.7" fill="#81a2be" fill-opacity="0.30"/><rect x="961.45" y="68.20" width="0.95" height="1.7" fill="#de935f" fill-opacity="0.85"/><rect x="962.40" y="68.20" width="0.95" height="1.7" fill="#de935f" fill-opacity="0.85"/><rect x="963.35" y="68.20" width="0.95" height="1.7" fill="#de935f" fill-opacity="0.85"/><rect x="964.30" y="68.20" width="0.95" height="1.7" fill="#de935f" fill-opacity="0.85"/><rect x="965.25" y="68.20" width="0.95" height="1.7" fill="#8abeb7" fill-opacity="0.55"/><rect x="966.20" y="68.20" width="0.95" height="1.7" fill="#b294bb" fill-opacity="0.85"/><rect x="967.15" y="68.20" width="0.95" height="1.7" fill="#b5bd68" fill-opacity="0.30"/><rect x="968.10" y="68.20" width="0.95" height="1.7" fill="#81a2be" fill-opacity="0.60"/><rect x="969.05" y="68.20" width="0.95" height="1.7" fill="#81a2be" fill-opacity="0.85"/><rect x="970.00" y="68.20" width="0.95" height="1.7" fill="#81a2be" fill-opacity="0.85"/><rect x="970.95" y="68.20" width="0.95" height="1.7" fill="#81a2be" fill-opacity="0.85"/><rect x="971.90" y="68.20" width="0.95" height="1.7" fill="#81a2be" fill-opacity="0.85"/><rect x="972.85" y="68.20" width="0.95" height="1.7" fill="#81a2be" fill-opacity="0.25"/><rect x="973.80" y="68.20" width="0.95" height="1.7" fill="#81a2be" fill-opacity="0.85"/><rect x="974.75" y="68.20" width="0.95" height="1.7" fill="#81a2be" fill-opacity="0.85"/><rect x="975.70" y="68.20" width="0.95" height="1.7" fill="#81a2be" fill-opacity="0.85"/><rect x="976.65" y="68.20" width="0.95" height="1.7" fill="#81a2be" fill-opacity="0.85"/><rect x="977.60" y="68.20" width="0.95" height="1.7" fill="#81a2be" fill-opacity="0.60"/><rect x="978.55" y="68.20" width="0.95" height="1.7" fill="#b5bd68" fill-opacity="0.45"/><rect x="979.50" y="68.20" width="0.95" height="1.7" fill="#b5bd68" fill-opacity="0.85"/><rect x="980.45" y="68.20" width="0.95" height="1.7" fill="#b5bd68" fill-opacity="0.85"/><rect x="981.40" y="68.20" width="0.95" height="1.7" fill="#b5bd68" fill-opacity="0.85"/><rect x="982.35" y="68.20" width="0.95" height="1.7" fill="#b5bd68" fill-opacity="0.85"/><rect x="983.30" y="68.20" width="0.95" height="1.7" fill="#b5bd68" fill-opacity="0.45"/><rect x="984.25" y="68.20" width="0.95" height="1.7" fill="#81a2be" fill-opacity="0.60"/><rect x="985.20" y="68.20" width="0.95" height="1.7" fill="#81a2be" fill-opacity="0.60"/><rect x="986.15" y="68.20" width="0.95" height="1.7" fill="#b5bd68" fill-opacity="0.25"/><rect x="987.10" y="68.20" width="0.95" height="1.7" fill="#b5bd68" fill-opacity="0.85"/><rect x="988.05" y="68.20" width="0.95" height="1.7" fill="#b5bd68" fill-opacity="0.85"/><rect x="989.00" y="68.20" width="0.95" height="1.7" fill="#b5bd68" fill-opacity="0.85"/><rect x="989.95" y="68.20" width="0.95" height="1.7" fill="#b5bd68" fill-opacity="0.85"/><rect x="990.90" y="68.20" width="0.95" height="1.7" fill="#b5bd68" fill-opacity="0.30"/><rect x="954.80" y="70.20" width="0.95" height="1.7" fill="#81a2be" fill-opacity="0.55"/><rect x="954.80" y="74.20" width="0.95" height="1.7" fill="#c5c8c6" fill-opacity="0.85"/><rect x="955.75" y="74.20" width="0.95" height="1.7" fill="#c5c8c6" fill-opacity="0.85"/><rect x="956.70" y="74.20" width="0.95" height="1.7" fill="#c5c8c6" fill-opacity="0.85"/><rect x="957.65" y="74.20" width="0.95" height="1.7" fill="#c5c8c6" fill-opacity="0.85"/><rect x="958.60" y="74.20" width="0.95" height="1.7" fill="#c5c8c6" fill-opacity="0.25"/><rect x="959.55" y="74.20" width="0.95" height="1.7" fill="#c5c8c6" fill-opacity="0.85"/><rect x="960.50" y="74.20" width="0.95" height="1.7" fill="#c5c8c6" fill-opacity="0.85"/><rect x="961.45" y="74.20" width="0.95" height="1.7" fill="#c5c8c6" fill-opacity="0.85"/><rect x="962.40" y="74.20" width="0.95" height="1.7" fill="#c5c8c6" fill-opacity="0.85"/><rect x="963.35" y="74.20" width="0.95" height="1.7" fill="#c5c8c6" fill-opacity="0.60"/><rect x="964.30" y="74.20" width="0.95" height="1.7" fill="#b5bd68" fill-opacity="0.45"/><rect x="965.25" y="74.20" width="0.95" height="1.7" fill="#b5bd68" fill-opacity="0.85"/><rect x="966.20" y="74.20" width="0.95" height="1.7" fill="#b5bd68" fill-opacity="0.85"/><rect x="967.15" y="74.20" width="0.95" height="1.7" fill="#b5bd68" fill-opacity="0.85"/><rect x="968.10" y="74.20" width="0.95" height="1.7" fill="#b5bd68" fill-opacity="0.45"/><rect x="969.05" y="74.20" width="0.95" height="1.7" fill="#c5c8c6" fill-opacity="0.60"/><rect x="970.95" y="74.20" width="0.95" height="1.7" fill="#8abeb7" fill-opacity="0.55"/><rect x="972.85" y="74.20" width="0.95" height="1.7" fill="#c5c8c6" fill-opacity="0.85"/><rect x="973.80" y="74.20" width="0.95" height="1.7" fill="#c5c8c6" fill-opacity="0.85"/><rect x="974.75" y="74.20" width="0.95" height="1.7" fill="#c5c8c6" fill-opacity="0.85"/><rect x="975.70" y="74.20" width="0.95" height="1.7" fill="#c5c8c6" fill-opacity="0.85"/><rect x="976.65" y="74.20" width="0.95" height="1.7" fill="#c5c8c6" fill-opacity="0.25"/><rect x="977.60" y="74.20" width="0.95" height="1.7" fill="#c5c8c6" fill-opacity="0.85"/><rect x="978.55" y="74.20" width="0.95" height="1.7" fill="#c5c8c6" fill-opacity="0.85"/><rect x="979.50" y="74.20" width="0.95" height="1.7" fill="#c5c8c6" fill-opacity="0.85"/><rect x="980.45" y="74.20" width="0.95" height="1.7" fill="#c5c8c6" fill-opacity="0.85"/><rect x="981.40" y="74.20" width="0.95" height="1.7" fill="#c5c8c6" fill-opacity="0.85"/><rect x="982.35" y="74.20" width="0.95" height="1.7" fill="#c5c8c6" fill-opacity="0.85"/><rect x="983.30" y="74.20" width="0.95" height="1.7" fill="#c5c8c6" fill-opacity="0.60"/><rect x="984.25" y="74.20" width="0.95" height="1.7" fill="#b5bd68" fill-opacity="0.45"/><rect x="985.20" y="74.20" width="0.95" height="1.7" fill="#b5bd68" fill-opacity="0.85"/><rect x="986.15" y="74.20" width="0.95" height="1.7" fill="#b5bd68" fill-opacity="0.85"/><rect x="987.10" y="74.20" width="0.95" height="1.7" fill="#b5bd68" fill-opacity="0.85"/><rect x="988.05" y="74.20" width="0.95" height="1.7" fill="#b5bd68" fill-opacity="0.45"/><rect x="989.00" y="74.20" width="0.95" height="1.7" fill="#c5c8c6" fill-opacity="0.60"/><rect x="954.80" y="76.20" width="0.95" height="1.7" fill="#c5c8c6" fill-opacity="0.85"/><rect x="955.75" y="76.20" width="0.95" height="1.7" fill="#c5c8c6" fill-opacity="0.85"/><rect x="956.70" y="76.20" width="0.95" height="1.7" fill="#c5c8c6" fill-opacity="0.85"/><rect x="957.65" y="76.20" width="0.95" height="1.7" fill="#c5c8c6" fill-opacity="0.85"/><rect x="958.60" y="76.20" width="0.95" height="1.7" fill="#c5c8c6" fill-opacity="0.25"/><rect x="959.55" y="76.20" width="0.95" height="1.7" fill="#c5c8c6" fill-opacity="0.85"/><rect x="960.50" y="76.20" width="0.95" height="1.7" fill="#c5c8c6" fill-opacity="0.85"/><rect x="961.45" y="76.20" width="0.95" height="1.7" fill="#c5c8c6" fill-opacity="0.85"/><rect x="962.40" y="76.20" width="0.95" height="1.7" fill="#c5c8c6" fill-opacity="0.85"/><rect x="963.35" y="76.20" width="0.95" height="1.7" fill="#c5c8c6" fill-opacity="0.60"/><rect x="964.30" y="76.20" width="0.95" height="1.7" fill="#b5bd68" fill-opacity="0.45"/><rect x="965.25" y="76.20" width="0.95" height="1.7" fill="#b5bd68" fill-opacity="0.85"/><rect x="966.20" y="76.20" width="0.95" height="1.7" fill="#b5bd68" fill-opacity="0.85"/><rect x="967.15" y="76.20" width="0.95" height="1.7" fill="#b5bd68" fill-opacity="0.85"/><rect x="968.10" y="76.20" width="0.95" height="1.7" fill="#b5bd68" fill-opacity="0.85"/><rect x="969.05" y="76.20" width="0.95" height="1.7" fill="#b5bd68" fill-opacity="0.85"/><rect x="970.00" y="76.20" width="0.95" height="1.7" fill="#b5bd68" fill-opacity="0.85"/><rect x="970.95" y="76.20" width="0.95" height="1.7" fill="#b5bd68" fill-opacity="0.85"/><rect x="971.90" y="76.20" width="0.95" height="1.7" fill="#b5bd68" fill-opacity="0.85"/><rect x="972.85" y="76.20" width="0.95" height="1.7" fill="#b5bd68" fill-opacity="0.45"/><rect x="973.80" y="76.20" width="0.95" height="1.7" fill="#c5c8c6" fill-opacity="0.60"/><rect x="975.70" y="76.20" width="0.95" height="1.7" fill="#8abeb7" fill-opacity="0.55"/><rect x="977.60" y="76.20" width="0.95" height="1.7" fill="#c5c8c6" fill-opacity="0.85"/><rect x="978.55" y="76.20" width="0.95" height="1.7" fill="#c5c8c6" fill-opacity="0.85"/><rect x="979.50" y="76.20" width="0.95" height="1.7" fill="#c5c8c6" fill-opacity="0.85"/><rect x="980.45" y="76.20" width="0.95" height="1.7" fill="#c5c8c6" fill-opacity="0.85"/><rect x="981.40" y="76.20" width="0.95" height="1.7" fill="#c5c8c6" fill-opacity="0.25"/><rect x="982.35" y="76.20" width="0.95" height="1.7" fill="#c5c8c6" fill-opacity="0.85"/><rect x="983.30" y="76.20" width="0.95" height="1.7" fill="#c5c8c6" fill-opacity="0.85"/><rect x="984.25" y="76.20" width="0.95" height="1.7" fill="#c5c8c6" fill-opacity="0.85"/><rect x="985.20" y="76.20" width="0.95" height="1.7" fill="#c5c8c6" fill-opacity="0.85"/><rect x="986.15" y="76.20" width="0.95" height="1.7" fill="#c5c8c6" fill-opacity="0.85"/><rect x="987.10" y="76.20" width="0.95" height="1.7" fill="#c5c8c6" fill-opacity="0.85"/><rect x="988.05" y="76.20" width="0.95" height="1.7" fill="#c5c8c6" fill-opacity="0.60"/><rect x="989.00" y="76.20" width="0.95" height="1.7" fill="#b5bd68" fill-opacity="0.45"/><rect x="989.95" y="76.20" width="0.95" height="1.7" fill="#b5bd68" fill-opacity="0.85"/><rect x="990.90" y="76.20" width="0.95" height="1.7" fill="#b5bd68" fill-opacity="0.85"/><rect x="991.85" y="76.20" width="0.95" height="1.7" fill="#b5bd68" fill-opacity="0.85"/><rect x="992.80" y="76.20" width="0.95" height="1.7" fill="#b5bd68" fill-opacity="0.85"/><rect x="993.75" y="76.20" width="0.95" height="1.7" fill="#b5bd68" fill-opacity="0.85"/><rect x="994.70" y="76.20" width="0.95" height="1.7" fill="#b5bd68" fill-opacity="0.85"/><rect x="995.65" y="76.20" width="0.95" height="1.7" fill="#b5bd68" fill-opacity="0.85"/><rect x="996.60" y="76.20" width="0.95" height="1.7" fill="#b5bd68" fill-opacity="0.85"/><rect x="997.55" y="76.20" width="0.95" height="1.7" fill="#b5bd68" fill-opacity="0.45"/><rect x="998.50" y="76.20" width="0.95" height="1.7" fill="#c5c8c6" fill-opacity="0.60"/><rect x="954.80" y="78.20" width="0.95" height="1.7" fill="#c5c8c6" fill-opacity="0.85"/><rect x="955.75" y="78.20" width="0.95" height="1.7" fill="#c5c8c6" fill-opacity="0.85"/><rect x="956.70" y="78.20" width="0.95" height="1.7" fill="#c5c8c6" fill-opacity="0.85"/><rect x="957.65" y="78.20" width="0.95" height="1.7" fill="#c5c8c6" fill-opacity="0.85"/><rect x="958.60" y="78.20" width="0.95" height="1.7" fill="#c5c8c6" fill-opacity="0.25"/><rect x="959.55" y="78.20" width="0.95" height="1.7" fill="#c5c8c6" fill-opacity="0.85"/><rect x="960.50" y="78.20" width="0.95" height="1.7" fill="#c5c8c6" fill-opacity="0.85"/><rect x="961.45" y="78.20" width="0.95" height="1.7" fill="#c5c8c6" fill-opacity="0.85"/><rect x="962.40" y="78.20" width="0.95" height="1.7" fill="#c5c8c6" fill-opacity="0.85"/><rect x="963.35" y="78.20" width="0.95" height="1.7" fill="#c5c8c6" fill-opacity="0.60"/><rect x="964.30" y="78.20" width="0.95" height="1.7" fill="#b5bd68" fill-opacity="0.45"/><rect x="965.25" y="78.20" width="0.95" height="1.7" fill="#b5bd68" fill-opacity="0.85"/><rect x="966.20" y="78.20" width="0.95" height="1.7" fill="#b5bd68" fill-opacity="0.85"/><rect x="967.15" y="78.20" width="0.95" height="1.7" fill="#b5bd68" fill-opacity="0.85"/><rect x="968.10" y="78.20" width="0.95" height="1.7" fill="#b5bd68" fill-opacity="0.85"/><rect x="969.05" y="78.20" width="0.95" height="1.7" fill="#b5bd68" fill-opacity="0.85"/><rect x="970.00" y="78.20" width="0.95" height="1.7" fill="#b5bd68" fill-opacity="0.85"/><rect x="970.95" y="78.20" width="0.95" height="1.7" fill="#b5bd68" fill-opacity="0.85"/><rect x="971.90" y="78.20" width="0.95" height="1.7" fill="#b5bd68" fill-opacity="0.85"/><rect x="972.85" y="78.20" width="0.95" height="1.7" fill="#b5bd68" fill-opacity="0.35"/><rect x="973.80" y="78.20" width="0.95" height="1.7" fill="#b5bd68" fill-opacity="0.85"/><rect x="974.75" y="78.20" width="0.95" height="1.7" fill="#b5bd68" fill-opacity="0.85"/><rect x="975.70" y="78.20" width="0.95" height="1.7" fill="#b5bd68" fill-opacity="0.85"/><rect x="976.65" y="78.20" width="0.95" height="1.7" fill="#b5bd68" fill-opacity="0.85"/><rect x="977.60" y="78.20" width="0.95" height="1.7" fill="#b5bd68" fill-opacity="0.85"/><rect x="978.55" y="78.20" width="0.95" height="1.7" fill="#b5bd68" fill-opacity="0.85"/><rect x="979.50" y="78.20" width="0.95" height="1.7" fill="#b5bd68" fill-opacity="0.45"/><rect x="980.45" y="78.20" width="0.95" height="1.7" fill="#c5c8c6" fill-opacity="0.60"/><rect x="982.35" y="78.20" width="0.95" height="1.7" fill="#8abeb7" fill-opacity="0.55"/><rect x="984.25" y="78.20" width="0.95" height="1.7" fill="#81a2be" fill-opacity="0.85"/><rect x="985.20" y="78.20" width="0.95" height="1.7" fill="#81a2be" fill-opacity="0.85"/><rect x="986.15" y="78.20" width="0.95" height="1.7" fill="#81a2be" fill-opacity="0.85"/><rect x="987.10" y="78.20" width="0.95" height="1.7" fill="#81a2be" fill-opacity="0.85"/><rect x="988.05" y="78.20" width="0.95" height="1.7" fill="#81a2be" fill-opacity="0.25"/><rect x="989.00" y="78.20" width="0.95" height="1.7" fill="#cc6666" fill-opacity="0.85"/><rect x="989.95" y="78.20" width="0.95" height="1.7" fill="#cc6666" fill-opacity="0.85"/><rect x="990.90" y="78.20" width="0.95" height="1.7" fill="#cc6666" fill-opacity="0.85"/><rect x="991.85" y="78.20" width="0.95" height="1.7" fill="#81a2be" fill-opacity="0.55"/><rect x="984.25" y="80.20" width="0.95" height="1.7" fill="#de935f" fill-opacity="0.85"/><rect x="985.20" y="80.20" width="0.95" height="1.7" fill="#de935f" fill-opacity="0.85"/><rect x="986.15" y="80.20" width="0.95" height="1.7" fill="#de935f" fill-opacity="0.85"/><rect x="987.10" y="80.20" width="0.95" height="1.7" fill="#de935f" fill-opacity="0.85"/><rect x="988.05" y="80.20" width="0.95" height="1.7" fill="#8abeb7" fill-opacity="0.55"/><rect x="989.00" y="80.20" width="0.95" height="1.7" fill="#81a2be" fill-opacity="0.85"/><rect x="989.95" y="80.20" width="0.95" height="1.7" fill="#81a2be" fill-opacity="0.85"/><rect x="990.90" y="80.20" width="0.95" height="1.7" fill="#81a2be" fill-opacity="0.85"/><rect x="991.85" y="80.20" width="0.95" height="1.7" fill="#81a2be" fill-opacity="0.85"/><rect x="992.80" y="80.20" width="0.95" height="1.7" fill="#81a2be" fill-opacity="0.85"/><rect x="993.75" y="80.20" width="0.95" height="1.7" fill="#81a2be" fill-opacity="0.85"/><rect x="994.70" y="80.20" width="0.95" height="1.7" fill="#81a2be" fill-opacity="0.85"/><rect x="995.65" y="80.20" width="0.95" height="1.7" fill="#81a2be" fill-opacity="0.85"/><rect x="996.60" y="80.20" width="0.95" height="1.7" fill="#81a2be" fill-opacity="0.35"/><rect x="997.55" y="80.20" width="0.95" height="1.7" fill="#81a2be" fill-opacity="0.85"/><rect x="998.50" y="80.20" width="0.95" height="1.7" fill="#81a2be" fill-opacity="0.85"/><rect x="999.45" y="80.20" width="0.95" height="1.7" fill="#81a2be" fill-opacity="0.85"/><rect x="1000.40" y="80.20" width="0.95" height="1.7" fill="#81a2be" fill-opacity="0.85"/><rect x="1001.35" y="80.20" width="0.95" height="1.7" fill="#81a2be" fill-opacity="0.30"/><rect x="984.25" y="82.20" width="0.95" height="1.7" fill="#de935f" fill-opacity="0.85"/><rect x="985.20" y="82.20" width="0.95" height="1.7" fill="#de935f" fill-opacity="0.85"/><rect x="986.15" y="82.20" width="0.95" height="1.7" fill="#de935f" fill-opacity="0.85"/><rect x="987.10" y="82.20" width="0.95" height="1.7" fill="#de935f" fill-opacity="0.85"/><rect x="988.05" y="82.20" width="0.95" height="1.7" fill="#de935f" fill-opacity="0.85"/><rect x="989.00" y="82.20" width="0.95" height="1.7" fill="#de935f" fill-opacity="0.85"/><rect x="989.95" y="82.20" width="0.95" height="1.7" fill="#de935f" fill-opacity="0.85"/><rect x="990.90" y="82.20" width="0.95" height="1.7" fill="#de935f" fill-opacity="0.85"/><rect x="991.85" y="82.20" width="0.95" height="1.7" fill="#8abeb7" fill-opacity="0.55"/><rect x="992.80" y="82.20" width="0.95" height="1.7" fill="#b5bd68" fill-opacity="0.45"/><rect x="993.75" y="82.20" width="0.95" height="1.7" fill="#b5bd68" fill-opacity="0.85"/><rect x="994.70" y="82.20" width="0.95" height="1.7" fill="#b5bd68" fill-opacity="0.85"/><rect x="995.65" y="82.20" width="0.95" height="1.7" fill="#b5bd68" fill-opacity="0.85"/><rect x="996.60" y="82.20" width="0.95" height="1.7" fill="#b5bd68" fill-opacity="0.85"/><rect x="997.55" y="82.20" width="0.95" height="1.7" fill="#b5bd68" fill-opacity="0.85"/><rect x="998.50" y="82.20" width="0.95" height="1.7" fill="#b5bd68" fill-opacity="0.85"/><rect x="999.45" y="82.20" width="0.95" height="1.7" fill="#b5bd68" fill-opacity="0.25"/><rect x="1000.40" y="82.20" width="0.95" height="1.7" fill="#b5bd68" fill-opacity="0.85"/><rect x="1001.35" y="82.20" width="0.95" height="1.7" fill="#b5bd68" fill-opacity="0.85"/><rect x="1002.30" y="82.20" width="0.95" height="1.7" fill="#b5bd68" fill-opacity="0.45"/><rect x="1003.25" y="82.20" width="0.95" height="1.7" fill="#81a2be" fill-opacity="0.30"/><rect x="1005.15" y="82.20" width="0.95" height="1.7" fill="#de935f" fill-opacity="0.85"/><rect x="1006.10" y="82.20" width="0.95" height="1.7" fill="#de935f" fill-opacity="0.85"/><rect x="1007.05" y="82.20" width="0.95" height="1.7" fill="#de935f" fill-opacity="0.85"/><rect x="1008.00" y="82.20" width="0.95" height="1.7" fill="#de935f" fill-opacity="0.85"/><rect x="1008.95" y="82.20" width="0.95" height="1.7" fill="#8abeb7" fill-opacity="0.55"/><rect x="1009.90" y="82.20" width="0.95" height="1.7" fill="#b5bd68" fill-opacity="0.45"/><rect x="1010.85" y="82.20" width="0.95" height="1.7" fill="#b5bd68" fill-opacity="0.45"/><rect x="984.25" y="84.20" width="0.95" height="1.7" fill="#81a2be" fill-opacity="0.55"/><rect x="951.00" y="90.20" width="0.95" height="1.7" fill="#c5c8c6" fill-opacity="0.85"/><rect x="951.95" y="90.20" width="0.95" height="1.7" fill="#c5c8c6" fill-opacity="0.85"/><rect x="953.85" y="90.20" width="0.95" height="1.7" fill="#8abeb7" fill-opacity="0.55"/><rect x="955.75" y="90.20" width="0.95" height="1.7" fill="#cc6666" fill-opacity="1.00"/><rect x="956.70" y="90.20" width="0.95" height="1.7" fill="#cc6666" fill-opacity="0.85"/><rect x="957.65" y="90.20" width="0.95" height="1.7" fill="#cc6666" fill-opacity="0.85"/><rect x="958.60" y="90.20" width="0.95" height="1.7" fill="#cc6666" fill-opacity="0.85"/><rect x="959.55" y="90.20" width="0.95" height="1.7" fill="#cc6666" fill-opacity="1.00"/><rect x="960.50" y="90.20" width="0.95" height="1.7" fill="#cc6666" fill-opacity="0.85"/><rect x="961.45" y="90.20" width="0.95" height="1.7" fill="#cc6666" fill-opacity="0.85"/><rect x="962.40" y="90.20" width="0.95" height="1.7" fill="#cc6666" fill-opacity="0.85"/><rect x="963.35" y="90.20" width="0.95" height="1.7" fill="#cc6666" fill-opacity="0.85"/><rect x="964.30" y="90.20" width="0.95" height="1.7" fill="#cc6666" fill-opacity="0.85"/><rect x="965.25" y="90.20" width="0.95" height="1.7" fill="#81a2be" fill-opacity="0.55"/><rect x="966.20" y="90.20" width="0.95" height="1.7" fill="#81a2be" fill-opacity="0.55"/><rect x="951.00" y="92.20" width="0.95" height="1.7" fill="#c5c8c6" fill-opacity="0.85"/><rect x="951.95" y="92.20" width="0.95" height="1.7" fill="#c5c8c6" fill-opacity="0.85"/><rect x="952.90" y="92.20" width="0.95" height="1.7" fill="#c5c8c6" fill-opacity="0.85"/><rect x="953.85" y="92.20" width="0.95" height="1.7" fill="#c5c8c6" fill-opacity="0.85"/><rect x="954.80" y="92.20" width="0.95" height="1.7" fill="#c5c8c6" fill-opacity="0.85"/><rect x="955.75" y="92.20" width="0.95" height="1.7" fill="#c5c8c6" fill-opacity="0.85"/><rect x="956.70" y="92.20" width="0.95" height="1.7" fill="#c5c8c6" fill-opacity="0.85"/><rect x="958.60" y="92.20" width="0.95" height="1.7" fill="#8abeb7" fill-opacity="0.55"/><rect x="960.50" y="92.20" width="0.95" height="1.7" fill="#81a2be" fill-opacity="0.85"/><rect x="961.45" y="92.20" width="0.95" height="1.7" fill="#81a2be" fill-opacity="0.85"/><rect x="962.40" y="92.20" width="0.95" height="1.7" fill="#81a2be" fill-opacity="0.25"/><rect x="963.35" y="92.20" width="0.95" height="1.7" fill="#cc6666" fill-opacity="0.85"/><rect x="964.30" y="92.20" width="0.95" height="1.7" fill="#cc6666" fill-opacity="0.85"/><rect x="965.25" y="92.20" width="0.95" height="1.7" fill="#cc6666" fill-opacity="0.85"/><rect x="966.20" y="92.20" width="0.95" height="1.7" fill="#cc6666" fill-opacity="0.85"/><rect x="967.15" y="92.20" width="0.95" height="1.7" fill="#cc6666" fill-opacity="0.85"/><rect x="968.10" y="92.20" width="0.95" height="1.7" fill="#cc6666" fill-opacity="0.85"/><rect x="969.05" y="92.20" width="0.95" height="1.7" fill="#81a2be" fill-opacity="0.55"/><rect x="970.00" y="92.20" width="0.95" height="1.7" fill="#de935f" fill-opacity="0.85"/><rect x="970.95" y="92.20" width="0.95" height="1.7" fill="#de935f" fill-opacity="0.85"/><rect x="971.90" y="92.20" width="0.95" height="1.7" fill="#de935f" fill-opacity="0.85"/><rect x="972.85" y="92.20" width="0.95" height="1.7" fill="#de935f" fill-opacity="0.85"/><rect x="973.80" y="92.20" width="0.95" height="1.7" fill="#de935f" fill-opacity="0.85"/><rect x="974.75" y="92.20" width="0.95" height="1.7" fill="#de935f" fill-opacity="0.85"/><rect x="975.70" y="92.20" width="0.95" height="1.7" fill="#de935f" fill-opacity="0.35"/><rect x="976.65" y="92.20" width="0.95" height="1.7" fill="#de935f" fill-opacity="0.85"/><rect x="977.60" y="92.20" width="0.95" height="1.7" fill="#de935f" fill-opacity="0.85"/><rect x="978.55" y="92.20" width="0.95" height="1.7" fill="#de935f" fill-opacity="0.85"/><rect x="979.50" y="92.20" width="0.95" height="1.7" fill="#8abeb7" fill-opacity="0.55"/><rect x="980.45" y="92.20" width="0.95" height="1.7" fill="#b5bd68" fill-opacity="0.45"/><rect x="981.40" y="92.20" width="0.95" height="1.7" fill="#b5bd68" fill-opacity="0.85"/><rect x="982.35" y="92.20" width="0.95" height="1.7" fill="#b5bd68" fill-opacity="0.85"/><rect x="983.30" y="92.20" width="0.95" height="1.7" fill="#b5bd68" fill-opacity="0.85"/><rect x="984.25" y="92.20" width="0.95" height="1.7" fill="#b5bd68" fill-opacity="0.85"/><rect x="985.20" y="92.20" width="0.95" height="1.7" fill="#b5bd68" fill-opacity="0.85"/><rect x="986.15" y="92.20" width="0.95" height="1.7" fill="#b5bd68" fill-opacity="0.45"/><rect x="987.10" y="92.20" width="0.95" height="1.7" fill="#81a2be" fill-opacity="0.55"/><rect x="951.00" y="94.20" width="0.95" height="1.7" fill="#c5c8c6" fill-opacity="0.85"/><rect x="952.90" y="94.20" width="0.95" height="1.7" fill="#8abeb7" fill-opacity="0.55"/><rect x="954.80" y="94.20" width="0.95" height="1.7" fill="#81a2be" fill-opacity="0.85"/><rect x="955.75" y="94.20" width="0.95" height="1.7" fill="#81a2be" fill-opacity="0.85"/><rect x="956.70" y="94.20" width="0.95" height="1.7" fill="#81a2be" fill-opacity="0.85"/><rect x="957.65" y="94.20" width="0.95" height="1.7" fill="#81a2be" fill-opacity="0.85"/><rect x="958.60" y="94.20" width="0.95" height="1.7" fill="#81a2be" fill-opacity="0.85"/><rect x="959.55" y="94.20" width="0.95" height="1.7" fill="#81a2be" fill-opacity="0.85"/><rect x="960.50" y="94.20" width="0.95" height="1.7" fill="#81a2be" fill-opacity="0.85"/><rect x="961.45" y="94.20" width="0.95" height="1.7" fill="#81a2be" fill-opacity="0.25"/><rect x="962.40" y="94.20" width="0.95" height="1.7" fill="#cc6666" fill-opacity="0.85"/><rect x="963.35" y="94.20" width="0.95" height="1.7" fill="#cc6666" fill-opacity="0.85"/><rect x="964.30" y="94.20" width="0.95" height="1.7" fill="#cc6666" fill-opacity="0.85"/><rect x="965.25" y="94.20" width="0.95" height="1.7" fill="#81a2be" fill-opacity="0.55"/><rect x="966.20" y="94.20" width="0.95" height="1.7" fill="#81a2be" fill-opacity="0.85"/><rect x="967.15" y="94.20" width="0.95" height="1.7" fill="#81a2be" fill-opacity="0.85"/><rect x="968.10" y="94.20" width="0.95" height="1.7" fill="#81a2be" fill-opacity="0.85"/><rect x="969.05" y="94.20" width="0.95" height="1.7" fill="#81a2be" fill-opacity="0.85"/><rect x="970.00" y="94.20" width="0.95" height="1.7" fill="#81a2be" fill-opacity="0.35"/><rect x="970.95" y="94.20" width="0.95" height="1.7" fill="#81a2be" fill-opacity="0.85"/><rect x="971.90" y="94.20" width="0.95" height="1.7" fill="#81a2be" fill-opacity="0.85"/><rect x="972.85" y="94.20" width="0.95" height="1.7" fill="#81a2be" fill-opacity="0.85"/><rect x="973.80" y="94.20" width="0.95" height="1.7" fill="#81a2be" fill-opacity="0.85"/><rect x="974.75" y="94.20" width="0.95" height="1.7" fill="#81a2be" fill-opacity="0.55"/><rect x="951.00" y="96.20" width="0.95" height="1.7" fill="#cc6666" fill-opacity="0.85"/><rect x="951.95" y="96.20" width="0.95" height="1.7" fill="#cc6666" fill-opacity="0.85"/><rect x="952.90" y="96.20" width="0.95" height="1.7" fill="#cc6666" fill-opacity="0.85"/><rect x="953.85" y="96.20" width="0.95" height="1.7" fill="#cc6666" fill-opacity="0.85"/><rect x="954.80" y="96.20" width="0.95" height="1.7" fill="#cc6666" fill-opacity="0.85"/><rect x="955.75" y="96.20" width="0.95" height="1.7" fill="#cc6666" fill-opacity="0.35"/><rect x="956.70" y="96.20" width="0.95" height="1.7" fill="#cc6666" fill-opacity="0.85"/><rect x="957.65" y="96.20" width="0.95" height="1.7" fill="#cc6666" fill-opacity="0.85"/><rect x="958.60" y="96.20" width="0.95" height="1.7" fill="#cc6666" fill-opacity="0.85"/><rect x="959.55" y="96.20" width="0.95" height="1.7" fill="#cc6666" fill-opacity="0.85"/><rect x="960.50" y="96.20" width="0.95" height="1.7" fill="#cc6666" fill-opacity="0.85"/><rect x="961.45" y="96.20" width="0.95" height="1.7" fill="#cc6666" fill-opacity="0.85"/><rect x="962.40" y="96.20" width="0.95" height="1.7" fill="#81a2be" fill-opacity="0.55"/><rect x="963.35" y="96.20" width="0.95" height="1.7" fill="#81a2be" fill-opacity="0.85"/><rect x="964.30" y="96.20" width="0.95" height="1.7" fill="#81a2be" fill-opacity="0.55"/></svg>
<div id="status">
  <svg width="16" height="8" style="left:12px;top:8px"><rect x="0" y="0" width="16" height="8" rx="1.5" fill="#0e0e0e"/><rect x="1" y="1" width="14" height="5" fill="#2c2c2c"/><rect x="0" y="0" width="16" height="1" rx="0.5" fill="#1c1c1c"/></svg>
  <div class="st" style="left:32px">flake8(ok), Line 25, Column 1</div>
  <div class="st" style="left:852px">Spaces: 4</div>
  <div class="st" style="left:959px">Python</div>
</div>
</div>

</body></html>
